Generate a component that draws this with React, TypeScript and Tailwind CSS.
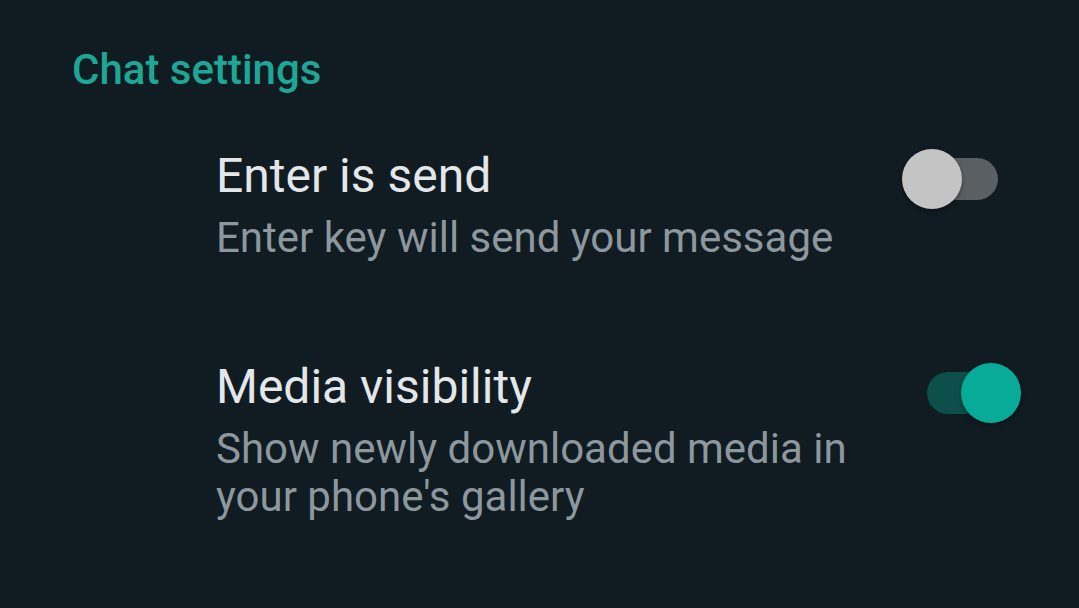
import { useState } from "react";

function Toggle({ on, onChange, className = "" }: { on: boolean; onChange: () => void; className?: string }) {
    return (
        <button
            type="button"
            onClick={onChange}
            className={`relative h-[60px] w-[110px] shrink-0 ${className}`}
        >
            <span
                className={`absolute top-[9px] left-[16px] h-[42px] w-[80px] rounded-full ${
                    on ? "bg-[#0c4f4b]" : "bg-[#5a5f63]"
                }`}
            />
            <span
                className={`absolute top-0 h-[60px] w-[60px] rounded-full shadow-[0_2px_4px_rgba(0,0,0,0.35)] ${
                    on ? "left-[50px] bg-[#07ab97]" : "left-0 bg-[#c4c4c4]"
                }`}
            />
        </button>
    );
}

function SettingRow({
    title,
    lines,
    on,
    onChange,
    toggleClass,
}: {
    title: string;
    lines: string[];
    on: boolean;
    onChange: () => void;
    toggleClass: string;
}) {
    return (
        <div className="flex items-start justify-between pl-[216px]">
            <div>
                <div className="text-[48px] leading-[56px] text-[#e3e7e9]">{title}</div>
                <div className="mt-[10px] text-[42px] leading-[48px] text-[#8c979e]">
                    {lines.map((l) => (
                        <div key={l}>{l}</div>
                    ))}
                </div>
            </div>
            <Toggle on={on} onChange={onChange} className={toggleClass} />
        </div>
    );
}

export default function App() {
    const [enterSend, setEnterSend] = useState(false);
    const [media, setMedia] = useState(true);

    return (
        <div className="h-[608px] w-[1079px] overflow-hidden bg-[#111b22] font-['Roboto',sans-serif]">
            <div className="pt-[46px] pl-[72px] text-[42px] leading-[48px] font-medium text-[#1ca796]">
                Chat settings
            </div>

            <div className="mt-[54px]">
                <SettingRow
                    title="Enter is send"
                    lines={["Enter key will send your message"]}
                    on={enterSend}
                    onChange={() => setEnterSend(!enterSend)}
                    toggleClass="mt-[1px] mr-[67px]"
                />
            </div>

            <div className="mt-[97px]">
                <SettingRow
                    title="Media visibility"
                    lines={["Show newly downloaded media in", "your phone's gallery"]}
                    on={media}
                    onChange={() => setMedia(!media)}
                    toggleClass="mt-[4px] mr-[58px]"
                />
            </div>
        </div>
    );
}
